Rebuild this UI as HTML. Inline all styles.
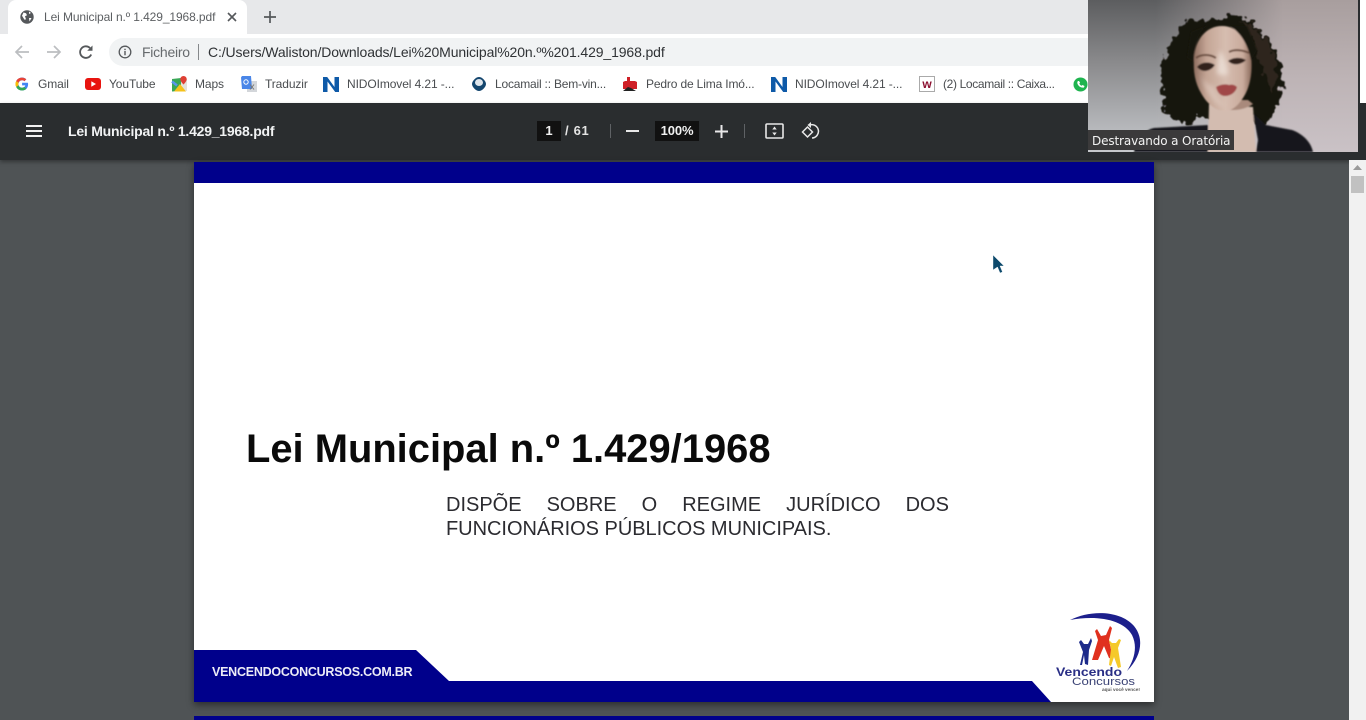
<!DOCTYPE html>
<html lang="pt"><head><meta charset="utf-8"><title>Lei Municipal</title>
<style>
html,body{margin:0;padding:0;width:1366px;height:720px;overflow:hidden;background:#4f5355}
body{font-family:"Liberation Sans",sans-serif;position:relative}
.a{position:absolute;white-space:nowrap}
.bm{position:absolute;top:76px;font-size:12px;line-height:16px;color:#4a4d50;white-space:nowrap;letter-spacing:-.1px}
svg{position:absolute;overflow:visible}
</style></head><body>
<div class="a" style="left:0;top:0;width:1366px;height:34px;background:#e7e8ea"></div>
<div class="a" style="left:8px;top:0;width:239px;height:34px;background:#fff;border-radius:8px 8px 0 0"></div>
<div class="a" style="left:0;top:34px;width:1366px;height:69px;background:#fff"></div>
<svg style="left:20px;top:10px" width="14" height="14" viewBox="0 0 14 14"><circle cx="7" cy="7" r="6.700" fill="#55585b"/><path d="M3.500 2.500l2.500.8 1 2-2 1 1 3-1.500.5-2.500-4zM9 1.500l2 1.500-2 1zM9 8l2.500 0-2 3.500z" fill="#fff"/></svg>
<div class="a" style="left:44px;top:10px;font-size:12px;line-height:14px;color:#5c5f62;letter-spacing:-.1px">Lei Municipal n.º 1.429_1968.pdf</div>
<svg style="left:227px;top:12px" width="10" height="10" viewBox="0 0 10 10"><path d="M1 1l8 8M9 1l-8 8" stroke="#55585b" stroke-width="1.600"/></svg>
<svg style="left:263px;top:10px" width="14" height="14" viewBox="0 0 14 14"><path d="M7 1v12M1 7h12" stroke="#55585b" stroke-width="1.700"/></svg>
<svg style="left:14px;top:44px" width="16" height="16" viewBox="0 0 16 16"><path d="M15 8H2M8 2L2 8l6 6" fill="none" stroke="#bcbec1" stroke-width="1.700"/></svg>
<svg style="left:46px;top:44px" width="16" height="16" viewBox="0 0 16 16"><path d="M1 8h13M8 2l6 6-6 6" fill="none" stroke="#bcbec1" stroke-width="1.700"/></svg>
<svg style="left:78px;top:44px" width="16" height="16" viewBox="0 0 16 16"><path d="M13.200 10.500A5.800 5.800 0 1 1 12 4" fill="none" stroke="#55585b" stroke-width="1.800"/><path d="M14.500 1.500v5.300H9.200z" fill="#55585b"/></svg>
<div class="a" style="left:109px;top:38px;width:1000px;height:28px;background:#f1f3f4;border-radius:14px"></div>
<svg style="left:118px;top:45px" width="14" height="14" viewBox="0 0 14 14"><circle cx="7" cy="7" r="5.800" fill="none" stroke="#55585b" stroke-width="1.300"/><path d="M7 6v4.200M7 3.700v1.400" stroke="#55585b" stroke-width="1.400"/></svg>
<div class="a" style="left:142px;top:44px;font-size:14px;line-height:16px;color:#666a6d;letter-spacing:-.25px">Ficheiro</div>
<div class="a" style="left:198px;top:44px;width:1px;height:16px;background:#85888b"></div>
<div class="a" style="left:208px;top:44px;font-size:14px;line-height:16px;color:#2f3235;letter-spacing:-.12px">C:/Users/Waliston/Downloads/Lei%20Municipal%20n.º%201.429_1968.pdf</div>

<svg style="left:15px;top:77px" width="14" height="14" viewBox="0 0 14 14"><path d="M12.800 5.800H7.100v2.600h3.200c-.4 1.500-1.600 2.300-3.200 2.300a3.700 3.700 0 0 1 0-7.400c.9 0 1.700.3 2.300.9l1.900-1.900A6.500 6.500 0 0 0 7.100.5a6.500 6.500 0 0 0 0 13c3.600 0 6-2.500 6-6.200 0-.5 0-1-.3-1.500z" fill="#4285f4"/><path d="M1.200 4l2.400 1.800a3.700 3.700 0 0 1 3.500-2.500c.9 0 1.700.3 2.300.9l1.900-1.900A6.500 6.500 0 0 0 1.200 4z" fill="#ea4335"/><path d="M3.500 8.200 1.200 10a6.500 6.500 0 0 0 5.900 3.500c1.700 0 3.200-.6 4.300-1.700L9.200 10a4 4 0 0 1-2.100.7 3.700 3.700 0 0 1-3.600-2.500z" fill="#34a853"/><path d="M1.200 4a6.500 6.500 0 0 0 0 6l2.300-1.800a3.800 3.800 0 0 1 .1-2.400z" fill="#fbbc05"/></svg>
<div class="bm" style="left:38px">Gmail</div>
<svg style="left:85px;top:78px" width="16" height="12" viewBox="0 0 16 12"><rect width="16" height="12" rx="3" fill="#e8140f"/><path d="M6.300 3.300 11 6l-4.700 2.700z" fill="#fff"/></svg>
<div class="bm" style="left:109px">YouTube</div>
<svg style="left:172px;top:76px" width="15" height="16" viewBox="0 0 15 16"><path d="M0 3l9-1v13l-9 .5z" fill="#3aa757"/><path d="M9 2l6 1v12l-6 .5z" fill="#e4e2da"/><path d="M2 15.500 8 8l6 7.500z" fill="#f5c21a"/><path d="M11.500 0a3.200 3.200 0 0 1 3.200 3.200c0 2.100-3.200 5.300-3.200 5.300S8.300 5.300 8.300 3.200A3.200 3.200 0 0 1 11.500 0z" fill="#df4034"/><path d="M0 5.500l5 4" stroke="#5b95ea" stroke-width="2.500"/></svg>
<div class="bm" style="left:195px">Maps</div>
<svg style="left:241px;top:76px" width="16" height="17" viewBox="0 0 16 17"><rect x="6" y="5" width="10" height="11" fill="#d3d6da"/><path d="M0 1.500 1 0h9l1 13H1z" fill="#4a86e8"/><path d="M9 8.500l4 5M13 8.500l-4 5" stroke="#777" stroke-width="1"/><circle cx="5" cy="6" r="2.200" fill="none" stroke="#fff" stroke-width="1"/></svg>
<div class="bm" style="left:265px">Traduzir</div>
<svg style="left:323px;top:76px" width="16" height="16" viewBox="0 0 16 16"><rect width="16" height="16" fill="#fff"/><path d="M0 16V1h4.200L11.500 11V1H16v15h-3.800L4.500 5.500V16z" fill="#0e5aa8"/></svg>
<div class="bm" style="left:347px">NIDOImovel 4.21 -...</div>
<svg style="left:471px;top:76px" width="16" height="16" viewBox="0 0 16 16"><path d="M8 1c3 0 7 4 7 7s-4 7-7 7-7-4-7-7 4-7 7-7z" fill="#14466e"/><ellipse cx="8" cy="6.500" rx="4" ry="3.500" fill="#dfe6ec"/></svg>
<div class="bm" style="left:495px;letter-spacing:-.2px">Locamail :: Bem-vin...</div>
<svg style="left:622px;top:76px" width="16" height="16" viewBox="0 0 16 16"><path d="M5 1h3v4h5l2 1v7H1V6l2-1h2z" fill="#cf2027"/><path d="M1 15l5-4 3 1 5 3z" fill="#222"/></svg>
<div class="bm" style="left:646px;letter-spacing:-.15px">Pedro de Lima Imó...</div>
<svg style="left:771px;top:76px" width="16" height="16" viewBox="0 0 16 16"><rect width="16" height="16" fill="#fff"/><path d="M0 16V1h4.200L11.500 11V1H16v15h-3.800L4.500 5.500V16z" fill="#0e5aa8"/></svg>
<div class="bm" style="left:795px">NIDOImovel 4.21 -...</div>
<div class="a" style="left:919px;top:76px;width:14px;height:14px;border:1px solid #aaa;background:#fff;color:#8c1030;font:bold 12px/14px 'Liberation Sans',sans-serif;text-align:center">w</div>
<div class="bm" style="left:943px;letter-spacing:-.35px">(2) Locamail :: Caixa...</div>
<svg style="left:1073px;top:77px" width="15" height="15" viewBox="0 0 15 15"><circle cx="7.500" cy="7.500" r="7" fill="#1fb44f"/><path d="M5 4c-1 1-1 2.500.5 4.500S9.500 11 11 10.500l.5-1.500-2-1-1 .8C7.500 8.300 6.800 7.500 6.300 6.500l.8-.9L6 4z" fill="#fff"/></svg>

<div class="a" style="left:0;top:103px;width:1366px;height:57px;background:#2a2d2f;box-shadow:0 2px 4px rgba(0,0,0,.35)"></div>
<svg style="left:26px;top:125px" width="16" height="12" viewBox="0 0 16 12"><path d="M0 1h16M0 6h16M0 11h16" stroke="#f1f1f1" stroke-width="2"/></svg>
<div class="a" style="left:68px;top:123px;font-size:14px;line-height:16px;font-weight:bold;color:#f1f3f4;letter-spacing:-.23px">Lei Municipal n.º 1.429_1968.pdf</div>
<div class="a" style="left:537px;top:121px;width:24px;height:20px;background:#111;color:#f1f1f1;font-size:13px;line-height:20px;text-align:center;font-weight:bold">1</div>
<div class="a" style="left:565px;top:123px;font-size:13px;line-height:16px;color:#e4e4e4;font-weight:bold;letter-spacing:.7px">/ 61</div>
<div class="a" style="left:610px;top:124px;width:1px;height:14px;background:#5f6265"></div>
<svg style="left:626px;top:130px" width="14" height="2"><rect width="13" height="2" fill="#e8e8e8"/></svg>
<div class="a" style="left:655px;top:121px;width:44px;height:20px;background:#111;color:#f1f1f1;font-size:13px;line-height:20px;text-align:center;font-weight:bold;letter-spacing:-.1px">100%</div>
<svg style="left:715px;top:125px" width="13" height="13" viewBox="0 0 13 13"><path d="M6.500 0v13M0 6.500h13" stroke="#e8e8e8" stroke-width="2"/></svg>
<div class="a" style="left:744px;top:124px;width:1px;height:14px;background:#5f6265"></div>
<svg style="left:765px;top:122px" width="20" height="18" viewBox="0 0 20 18"><rect x="1" y="2" width="17" height="14" rx="1" fill="none" stroke="#e8e8e8" stroke-width="1.600"/><path d="M9.500 4.500l2.200 3h-4.400zM9.500 13.500l2.200-3h-4.400z" fill="#e8e8e8"/></svg>
<svg style="left:801px;top:122px" width="20" height="18" viewBox="0 0 20 18"><path d="M1.500 10l5-5 5 5-5 5z" fill="none" stroke="#e8e8e8" stroke-width="1.500"/><path d="M8 3.200a6.700 6.700 0 1 1 3 12.800" fill="none" stroke="#e8e8e8" stroke-width="1.500"/><path d="M10 0v6L6.500 3z" fill="#e8e8e8"/></svg>

<div class="a" style="left:194px;top:162px;width:960px;height:540px;background:#fff;box-shadow:0 3px 7px rgba(0,0,0,.45)"></div>
<div class="a" style="left:194px;top:162px;width:960px;height:21px;background:#00008b"></div>
<div class="a" style="left:246px;top:426px;font-size:39.900px;line-height:46px;font-weight:bold;color:#0a0a0a">Lei Municipal n.º 1.429/1968</div>
<div class="a" style="left:446px;top:493px;width:503px;font-size:20px;line-height:24px;color:#2b2b30;display:flex;justify-content:space-between"><span>DISPÕE</span><span>SOBRE</span><span>O</span><span>REGIME</span><span>JURÍDICO</span><span>DOS</span></div>
<div class="a" style="left:446px;top:517px;font-size:20px;line-height:24px;color:#2b2b30;letter-spacing:-.03px">FUNCIONÁRIOS PÚBLICOS MUNICIPAIS.</div>
<svg style="left:194px;top:650px" width="960" height="52" viewBox="0 0 960 52"><path d="M0 0H222L255 31H838L857 52H0z" fill="#00008b"/></svg>
<div class="a" style="left:212px;top:664px;font-size:12.500px;line-height:16px;font-weight:bold;color:#ececf6;letter-spacing:-.25px">VENCENDOCONCURSOS.COM.BR</div>
<svg style="left:1050px;top:610px" width="96" height="84" viewBox="0 0 96 84">
<path d="M20 10C40 0 70 0 84 16c10 12 8 30-7 45 7-11 11-24 5-36C73 9 46 5 20 10z" fill="#1c1f8c"/>
<path d="M30 55l3-13-4-10 2-2 3 4h4l3-6 1 3-3 9-1 15-3-1-1-9-2 10z" fill="#1c2a8a"/>
<path d="M42 50l6-20-3-9 2-2 4 7 5-1 4-9 2 2-3 12 4 19-4-1-5-12-6 14z" fill="#e0301e"/>
<path d="M59 30l3 3h4l3-4 2 1-3 8 3 19-3 1-4-11-3 9-2-1 2-16z" fill="#f5c92a"/>
<text x="6" y="66" textLength="66" lengthAdjust="spacingAndGlyphs" font-family="Liberation Sans,sans-serif" font-size="11.500" font-weight="bold" fill="#2a2f86">Vencendo</text>
<text x="22" y="75" textLength="63" lengthAdjust="spacingAndGlyphs" font-family="Liberation Sans,sans-serif" font-size="11" fill="#3c4476">Concursos</text>
<text x="52" y="81" textLength="38" lengthAdjust="spacingAndGlyphs" font-family="Liberation Sans,sans-serif" font-size="4.500" font-weight="bold" fill="#555">aqui você vence!</text></svg>
<div class="a" style="left:194px;top:716px;width:960px;height:4px;background:#00008b"></div>

<div class="a" style="left:1349px;top:160px;width:17px;height:560px;background:#f1f1f1"></div>
<svg style="left:1353px;top:165px" width="9" height="6"><path d="M4.500 0L9 5H0z" fill="#9a9a9a"/></svg>
<div class="a" style="left:1351px;top:176px;width:13px;height:17px;background:#c1c1c1"></div>
<svg style="left:993px;top:255px" width="12" height="19" viewBox="0 0 12 19"><path d="M0 0l11 11H7l2.500 6-2.500 1-2.500-6L0 15z" fill="#0d4a6c" stroke="#fff" stroke-width=".4"/></svg>

<div class="a" style="left:1088px;top:0;width:270px;height:152px;overflow:hidden;background:#aaa">
<svg style="left:0;top:0" width="270" height="152" viewBox="0 0 270 152">
<defs>
<linearGradient id="v1" x1="0" y1="0" x2="0" y2="1"><stop offset="0" stop-color="#5c5d5f"/><stop offset=".4" stop-color="#89898b"/><stop offset="1" stop-color="#c6c8cc"/></linearGradient>
<linearGradient id="v2" x1="0" y1="0" x2="0" y2="1"><stop offset="0" stop-color="#a89e9e"/><stop offset=".5" stop-color="#bdb3b5"/><stop offset="1" stop-color="#cac2c6"/></linearGradient>
<linearGradient id="h" x1="0" y1="0" x2="1" y2="0"><stop offset=".25" stop-color="#fff"/><stop offset=".72" stop-color="#000"/></linearGradient>
<linearGradient id="fc" x1="0" y1="0" x2="1" y2="0"><stop offset="0" stop-color="#8f6f60"/><stop offset=".22" stop-color="#c4a595"/><stop offset=".55" stop-color="#d6bdb0"/><stop offset=".85" stop-color="#c9ab9c"/><stop offset="1" stop-color="#8a6a5b"/></linearGradient>
<mask id="m"><rect width="270" height="152" fill="url(#h)"/></mask>
<filter id="b1"><feGaussianBlur stdDeviation=".9"/></filter>
<filter id="b2" x="-40%" y="-40%" width="180%" height="180%"><feGaussianBlur stdDeviation="2.500"/></filter>
<filter id="curl" x="-15%" y="-15%" width="130%" height="130%"><feTurbulence type="fractalNoise" baseFrequency=".13" numOctaves="2" seed="4" result="n"/><feDisplacementMap in="SourceGraphic" in2="n" scale="14" xChannelSelector="R" yChannelSelector="G"/><feGaussianBlur stdDeviation=".5"/></filter>
</defs>
<rect width="270" height="152" fill="url(#v2)"/><rect width="270" height="152" fill="url(#v1)" mask="url(#m)"/>
<path d="M74 82C72 62 80 38 94 25c13-8 26-5 38-8 15-5 33 3 46 21 10 14 18 29 16 44 0 12-4 20-6 26-3 8-8 14-11 22l-20-14-48 0c-6 6-10 12-14 6-8-4-14-6-18-10-2-9-1-20-3-30z" fill="#17130f" filter="url(#curl)"/>
<path d="M152 20c12 3 24 14 31 30 5 12 7 30 0 45-5-20-17-54-31-75z" fill="#3a2d27" opacity=".65" filter="url(#curl)"/>
<g filter="url(#b1)">
<path d="M121 104l44 3 3 45H120z" fill="#d3bcb0"/>
<path d="M126 104c10 8 28 8 39 0l-5-4-30 0z" fill="#a98a7c"/>
<path d="M106 58c1-18 12-32 28-32 16 0 27 14 29 30 2 16-1 32-8 42-6 9-12 13-18 13-9 0-18-7-24-18-6-10-8-22-7-35z" fill="url(#fc)"/>
<path d="M118 26c-8 8-13 20-12 36l-7-4 4-26z" fill="#17130f"/>
<path d="M142 26c10 6 18 18 21 34l6-10-10-24z" fill="#17130f"/>
<path d="M108 58c5-4 14-4 20 0" stroke="#6b4d40" stroke-width="2" fill="none"/>
<path d="M141 52c6-3 14-2 20 1" stroke="#6b4d40" stroke-width="2" fill="none"/>
<path d="M109 67c4-5 12-6 18-2-5 7-13 8-18 2zM140 61c5-4 13-4 18-1-5 5-13 6-18 1z" fill="#33231d"/>
<path d="M128 87c5-3 10-3 13-2 3-1 6 0 8 2-1 5-6 9-12 9-5 0-8-4-9-9z" fill="#a04746"/>
<path d="M46 152c2-12 10-22 20-24l54-3v27z" fill="#14141a"/>
<path d="M165 113l13 12 26 5c11 4 19 12 21 22h-57l2-12z" fill="#14141a"/>
</g>
<path d="M132 50c-2 8-3 16-3 23 3 3 8 3 11 1-1-8-3-17-8-24z" fill="#efe4dc" opacity=".75" filter="url(#b2)"/>
<path d="M112 74c4 8 10 12 14 12 2 8 6 16 11 20-10 0-18-12-25-32z" fill="#e2cfc4" opacity=".6" filter="url(#b2)"/>
</svg>
<div style="position:absolute;left:0;top:130px;width:146px;height:20px;background:#3b3a3b;color:#f3f3f3;font:12px/22px 'DejaVu Sans','Liberation Sans',sans-serif;padding-left:4px;box-sizing:border-box;letter-spacing:-.13px">Destravando a Oratória</div>
</div>
<div class="a" style="left:1360px;top:0;width:6px;height:103px;background:#fff"></div>
<div class="a" style="left:1358px;top:0;width:2px;height:152px;background:#2a2d2f"></div>
</body></html>
